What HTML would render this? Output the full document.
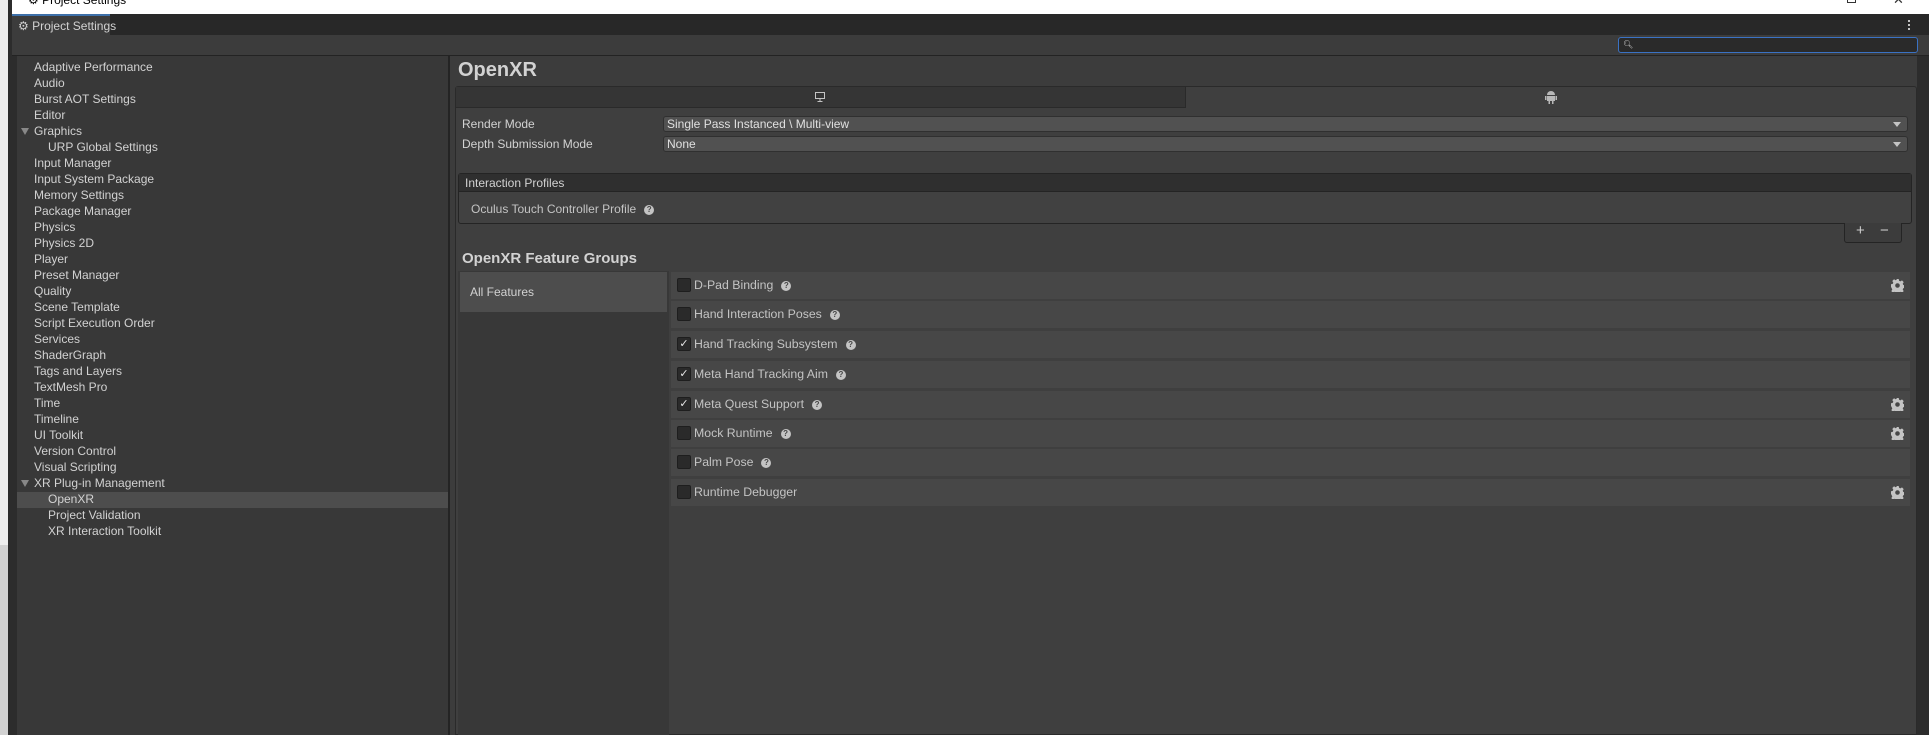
<!DOCTYPE html>
<html><head><meta charset="utf-8"><style>
*{box-sizing:border-box;margin:0;padding:0}
body{width:1929px;height:735px;overflow:hidden;background:#eeeeee;font-family:"Liberation Sans",sans-serif;font-size:12px;color:#d2d2d2;position:relative}
.a{position:absolute}
.t{position:absolute;white-space:nowrap;line-height:14px}
.li{position:absolute;left:34px;white-space:nowrap;line-height:16px;height:16px}
.row{position:absolute;left:671px;width:1239px;height:27px;background:#474747}
.cb{position:absolute;left:6px;top:6px;width:14px;height:14px;background:#2a2a2a;border:1px solid #1e1e1e;border-radius:2px;color:#e6e6e6;font-size:11px;line-height:12px;text-align:center}
.rl{position:absolute;left:23px;top:6px;color:#c4c4c4;line-height:14px;white-space:nowrap;font-size:12.3px}
.q{display:inline-block;width:10px;height:10px;border-radius:50%;background:#c4c4c4;color:#474747;font-size:8px;line-height:10px;text-align:center;font-weight:bold;margin-left:8px;vertical-align:1px}
.gear{position:absolute;right:6px;top:7px;width:13px;height:13px}
.dd{position:absolute;left:663px;width:1245px;height:16px;background:#515151;border:1px solid #303030;border-radius:3px;padding-left:3px;line-height:14px;color:#e0e0e0}
.dd:after{content:"";position:absolute;right:6px;top:5px;border-left:4px solid transparent;border-right:4px solid transparent;border-top:5px solid #c4c4c4}
</style></head><body>
<div class="a" style="left:0;top:545px;width:9px;height:190px;background:#d2d2d2"></div>
<div class="a" style="left:8px;top:0;width:9px;height:735px;background:#2c2c2c"></div>
<!-- title bar -->
<div class="a" style="left:12px;top:0;width:1917px;height:14px;background:#fff"></div>
<div class="t" style="left:28px;top:-7px;color:#000;font-size:12px">⚙ Project Settings</div>
<div class="a" style="left:1847px;top:-4px;width:9px;height:7px;border:1px solid #333"></div>
<div class="t" style="left:1893px;top:-7px;color:#333;font-size:13px">✕</div>
<!-- tab bar -->
<div class="a" style="left:12px;top:14px;width:1917px;height:21px;background:#282828"></div>
<div class="a" style="left:12px;top:14px;width:98px;height:21px;background:#3c3c3c;border-top:2px solid #3d6fa8"></div>
<div class="t" style="left:18px;top:19px;color:#d2d2d2">⚙ Project Settings</div>
<div class="a" style="left:1908px;top:20px;width:2px;height:2px;background:#c4c4c4;box-shadow:0 4px #c4c4c4,0 8px #c4c4c4"></div>
<!-- toolbar -->
<div class="a" style="left:12px;top:35px;width:1917px;height:21px;background:#3c3c3c;border-bottom:1px solid #232323"></div>
<div class="a" style="left:1618px;top:37px;width:300px;height:16px;background:#2a2a2a;border:1px solid #3a72c4;border-radius:3px"></div>
<div class="t" style="left:1623px;top:38px;font-size:8px;color:#ccc">🔍︎</div>
<!-- left panel -->
<div class="a" style="left:17px;top:56px;width:431px;height:679px;background:#383838"></div>
<div class="a" style="left:448px;top:56px;width:2px;height:679px;background:#242424"></div>
<div class="a" style="left:450px;top:56px;width:1479px;height:679px;background:#3c3c3c"></div>
<div class="a" style="left:17px;top:492px;width:431px;height:16px;background:#4d4d4d"></div>
<div style="position:absolute;left:0;top:59px">
<div class="li" style="top:0">Adaptive Performance</div>
<div class="li" style="top:16px">Audio</div>
<div class="li" style="top:32px">Burst AOT Settings</div>
<div class="li" style="top:48px">Editor</div>
<div class="li" style="top:64px">Graphics</div>
<div class="li" style="top:80px;left:48px">URP Global Settings</div>
<div class="li" style="top:96px">Input Manager</div>
<div class="li" style="top:112px">Input System Package</div>
<div class="li" style="top:128px">Memory Settings</div>
<div class="li" style="top:144px">Package Manager</div>
<div class="li" style="top:160px">Physics</div>
<div class="li" style="top:176px">Physics 2D</div>
<div class="li" style="top:192px">Player</div>
<div class="li" style="top:208px">Preset Manager</div>
<div class="li" style="top:224px">Quality</div>
<div class="li" style="top:240px">Scene Template</div>
<div class="li" style="top:256px">Script Execution Order</div>
<div class="li" style="top:272px">Services</div>
<div class="li" style="top:288px">ShaderGraph</div>
<div class="li" style="top:304px">Tags and Layers</div>
<div class="li" style="top:320px">TextMesh Pro</div>
<div class="li" style="top:336px">Time</div>
<div class="li" style="top:352px">Timeline</div>
<div class="li" style="top:368px">UI Toolkit</div>
<div class="li" style="top:384px">Version Control</div>
<div class="li" style="top:400px">Visual Scripting</div>
<div class="li" style="top:416px">XR Plug-in Management</div>
<div class="li" style="top:432px;left:48px">OpenXR</div>
<div class="li" style="top:448px;left:48px">Project Validation</div>
<div class="li" style="top:464px;left:48px">XR Interaction Toolkit</div>
</div>
<div class="a" style="left:21px;top:128px;border-left:4px solid transparent;border-right:4px solid transparent;border-top:7px solid #888"></div>
<div class="a" style="left:21px;top:480px;border-left:4px solid transparent;border-right:4px solid transparent;border-top:7px solid #888"></div>
<!-- right -->
<div class="t" style="left:458px;top:58px;font-size:20px;line-height:24px;font-weight:bold;color:#d2d2d2">OpenXR</div>
<div class="a" style="left:455px;top:86px;width:1462px;height:649px;background:#3f3f3f;border:1px solid #2a2a2a;border-radius:3px 3px 0 0"></div>
<div class="a" style="left:456px;top:87px;width:730px;height:21px;background:#353535;border-bottom:1px solid #2a2a2a;border-right:1px solid #2a2a2a"></div>
<svg class="a" style="left:814px;top:91px" width="12" height="12" viewBox="0 0 12 12"><rect x="1.5" y="1.5" width="9" height="6" fill="none" stroke="#c4c4c4"/><path d="M6 8v2M3.5 10.5h5" stroke="#c4c4c4"/></svg>
<svg class="a" style="left:1545px;top:90px" width="12" height="14" viewBox="0 0 12 14"><path d="M2 5a4 4 0 0 1 8 0z" fill="#b8b8b8"/><rect x="2" y="6" width="8" height="5" fill="#b8b8b8"/><rect x="0" y="6" width="1.5" height="4" fill="#b8b8b8"/><rect x="10.5" y="6" width="1.5" height="4" fill="#b8b8b8"/><rect x="3.5" y="11" width="1.5" height="3" fill="#b8b8b8"/><rect x="7" y="11" width="1.5" height="3" fill="#b8b8b8"/></svg>
<div class="t" style="left:462px;top:117px">Render Mode</div>
<div class="t" style="left:462px;top:137px">Depth Submission Mode</div>
<div class="dd" style="top:116px">Single Pass Instanced \ Multi-view</div>
<div class="dd" style="top:136px">None</div>
<!-- interaction profiles -->
<div class="a" style="left:458px;top:173px;width:1454px;height:51px;background:#414141;border:1px solid #242424;border-radius:3px"></div>
<div class="a" style="left:459px;top:174px;width:1452px;height:18px;background:#2f2f2f;border-bottom:1px solid #242424"></div>
<div class="t" style="left:465px;top:176px">Interaction Profiles</div>
<div class="t" style="left:471px;top:202px;color:#c4c4c4">Oculus Touch Controller Profile<span class="q">?</span></div>
<div class="a" style="left:1844px;top:223px;width:58px;height:20px;background:#3c3c3c;border:1px solid #242424;border-top:none;border-radius:0 0 3px 3px"></div>
<div class="t" style="left:1856px;top:224px;font-size:15px;color:#ccc">+</div>
<div class="t" style="left:1880px;top:224px;font-size:15px;color:#ccc">−</div>
<!-- feature groups -->
<div class="t" style="left:462px;top:250px;font-size:15px;line-height:18px;font-weight:bold;color:#d2d2d2">OpenXR Feature Groups</div>
<div class="a" style="left:458px;top:271px;width:211px;height:464px;background:#383838"></div>
<div class="a" style="left:460px;top:272px;width:207px;height:40px;background:#4d4d4d"></div>
<div class="t" style="left:470px;top:285px;color:#d2d2d2">All Features</div>
<svg width="0" height="0" style="position:absolute"><defs><symbol id="g" viewBox="0 0 13 13"><path fill="#c4c4c4" fill-rule="evenodd" d="M5.3 0h2.4l.4 1.8 1.3.6 1.6-1 1.7 1.7-1 1.6.6 1.3 1.8.4v2.4l-1.8.4-.6 1.3 1 1.6-1.7 1.7-1.6-1-1.3.6-.4 1.8H5.3l-.4-1.8-1.3-.6-1.6 1-1.7-1.7 1-1.6-.6-1.3L-.1 7.7V5.3l1.8-.4.6-1.3-1-1.6L3 .3l1.6 1 1.3-.6zM6.5 4.2a2.3 2.3 0 1 0 0 4.6 2.3 2.3 0 1 0 0-4.6z"/></symbol></defs></svg>
<div class="row" style="top:272px"><div class="cb"></div><div class="rl">D-Pad Binding<span class="q">?</span></div><svg class="gear"><use href="#g"/></svg></div>
<div class="row" style="top:301px"><div class="cb"></div><div class="rl">Hand Interaction Poses<span class="q">?</span></div></div>
<div class="row" style="top:331px"><div class="cb">✓</div><div class="rl">Hand Tracking Subsystem<span class="q">?</span></div></div>
<div class="row" style="top:361px"><div class="cb">✓</div><div class="rl">Meta Hand Tracking Aim<span class="q">?</span></div></div>
<div class="row" style="top:391px"><div class="cb">✓</div><div class="rl">Meta Quest Support<span class="q">?</span></div><svg class="gear"><use href="#g"/></svg></div>
<div class="row" style="top:420px"><div class="cb"></div><div class="rl">Mock Runtime<span class="q">?</span></div><svg class="gear"><use href="#g"/></svg></div>
<div class="row" style="top:449px"><div class="cb"></div><div class="rl">Palm Pose<span class="q">?</span></div></div>
<div class="row" style="top:479px"><div class="cb"></div><div class="rl">Runtime Debugger</div><svg class="gear"><use href="#g"/></svg></div>
<div class="a" style="left:1917px;top:56px;width:12px;height:679px;background:#2c2c2c"></div>
</body></html>
